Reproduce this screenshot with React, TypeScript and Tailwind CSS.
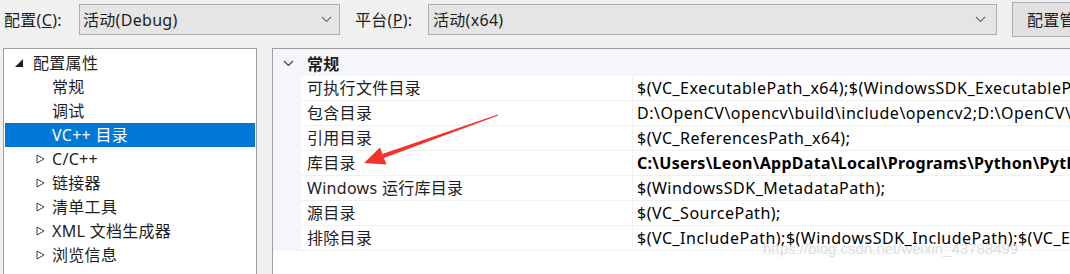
import React from 'react';

const font = { fontFamily: '"Noto Sans", "Noto Sans CJK SC", sans-serif' };

const Chevron: React.FC<{ className?: string }> = ({ className }) => (
  <svg width="11" height="7" viewBox="0 0 11 7" className={className}>
    <path d="M1 1 L5.5 5.5 L10 1" fill="none" stroke="currentColor" strokeWidth="1.2" />
  </svg>
);

const Expanded = () => (
  <svg width="8" height="8" viewBox="0 0 8 8" className="shrink-0">
    <polygon points="8,0 8,8 0,8" fill="#1e1e1e" />
  </svg>
);

const Collapsed = () => (
  <svg width="9" height="10" viewBox="0 0 9 10" className="shrink-0">
    <polygon points="1,1 8,5 1,9" fill="none" stroke="#404040" strokeWidth="1" />
  </svg>
);

const treeItems = [
  { label: '常规', child: true },
  { label: '调试', child: true },
  { label: 'VC++ 目录', child: true, selected: true },
  { label: 'C/C++' },
  { label: '链接器' },
  { label: '清单工具' },
  { label: 'XML 文档生成器' },
  { label: '浏览信息' },
];

const props = [
  { name: '可执行文件目录', value: '$(VC_ExecutablePath_x64);$(WindowsSDK_ExecutablePath);$(VS_ExecutablePath);$(MSBuild_ExecutablePath)' },
  { name: '包含目录', value: 'D:\\OpenCV\\opencv\\build\\include\\opencv2;D:\\OpenCV\\opencv\\build\\include;$(IncludePath)' },
  { name: '引用目录', value: '$(VC_ReferencesPath_x64);' },
  { name: '库目录', value: 'C:\\Users\\Leon\\AppData\\Local\\Programs\\Python\\Python37\\libs;$(LibraryPath)', bold: true },
  { name: 'Windows 运行库目录', value: '$(WindowsSDK_MetadataPath);' },
  { name: '源目录', value: '$(VC_SourcePath);' },
  { name: '排除目录', value: '$(VC_IncludePath);$(WindowsSDK_IncludePath);$(VC_ExecutablePath_x64);$(VC_LibraryPath_x64)' },
];

export default function App() {
  return (
    <div className="relative w-[1070px] h-[274px] overflow-hidden bg-[#f0f0f0] text-[16px] text-[#1e1e1e] tracking-[0.3px]" style={font}>
      {/* toolbar */}
      <div className="flex items-center h-[39px] whitespace-nowrap">
        <span className="ml-[4px] w-[75px] shrink-0">配置(<span className="underline">C</span>):</span>
        <div className="flex items-center w-[261px] h-[31px] shrink-0 bg-[#e5e5e5] border border-[#adadad] pl-[3px] pr-[7px]">
          <span className="flex-1">活动(Debug)</span>
          <Chevron className="text-[#707070]" />
        </div>
        <span className="ml-[15px] w-[73px] shrink-0">平台(<span className="underline">P</span>):</span>
        <div className="flex items-center w-[569px] h-[31px] shrink-0 bg-[#e5e5e5] border border-[#adadad] pl-[4px] pr-[10px]">
          <span className="flex-1">活动(x64)</span>
          <Chevron className="text-[#707070]" />
        </div>
        <div className="ml-[15px] flex items-center h-[35px] w-[140px] shrink-0 bg-[#e1e1e1] border border-[#adadad] pl-[14px]">
          配置管理器...
        </div>
      </div>

      {/* body */}
      <div className="flex mt-[9px] h-[240px]">
        <div className="ml-[3px] w-[254px] shrink-0 bg-white border border-b-0 border-[#a0a0a0] pt-[2px] px-[1px]">
          <div className="flex items-center h-[24px] pl-[10px] gap-[10px]">
            <Expanded />
            <span>配置属性</span>
          </div>
          {treeItems.map((it) => (
            <div
              key={it.label}
              className={
                it.selected
                  ? 'flex items-center h-[24px] bg-[#0078d7] text-white pl-[47px]'
                  : it.child
                  ? 'flex items-center h-[24px] pl-[47px]'
                  : 'flex items-center h-[24px] pl-[31px] gap-[7px]'
              }
            >
              {!it.child && <Collapsed />}
              <span>{it.label}</span>
            </div>
          ))}
        </div>

        <div className="ml-[15px] flex-1 bg-white border-l border-t border-[#a0a0a0] min-w-0">
          <div className="flex items-center h-[27px] pt-[2px] bg-[#f4f6fa]">
            <div className="w-[28px] flex justify-center pl-[2px]">
              <Chevron className="text-[#404040]" />
            </div>
            <span className="pl-[6px] font-bold">常规</span>
          </div>
          <div className="flex">
            <div className="w-[28px] bg-[#f4f6fa]" />
            <div className="flex-1 min-w-0">
              {props.map((p) => (
                <div key={p.name} className="flex h-[25px] border-b border-[#f0f0f0] whitespace-nowrap">
                  <div className="w-[331px] flex items-center pl-[6px] shrink-0">{p.name}</div>
                  <div
                    className={
                      p.bold
                        ? 'flex-1 flex items-center pl-[4px] border-l border-[#f0f0f0] overflow-hidden font-bold text-black tracking-[0.3px]'
                        : 'flex-1 flex items-center pl-[4px] border-l border-[#f0f0f0] overflow-hidden text-black tracking-[0.5px]'
                    }
                  >
                    {p.value}
                  </div>
                </div>
              ))}
            </div>
          </div>
        </div>
      </div>

      {/* annotation arrow */}
      <svg className="absolute left-0 top-0 pointer-events-none" width="1070" height="274">
        <polygon points="364,163 380,147.5 386.5,164.5" fill="#f5312b" />
        <polygon points="383.7,157.9 498.2,115.5 497.8,114.5 382.3,154.1" fill="#f5312b" />
      </svg>

      {/* watermark */}
      <div className="absolute left-[763px] top-[238px] text-[15px] tracking-normal text-[#dedede] whitespace-nowrap" style={{ fontFamily: '"Liberation Sans", sans-serif' }}>
        https://blog.csdn.net/weixin_43788499
      </div>
    </div>
  );
}
